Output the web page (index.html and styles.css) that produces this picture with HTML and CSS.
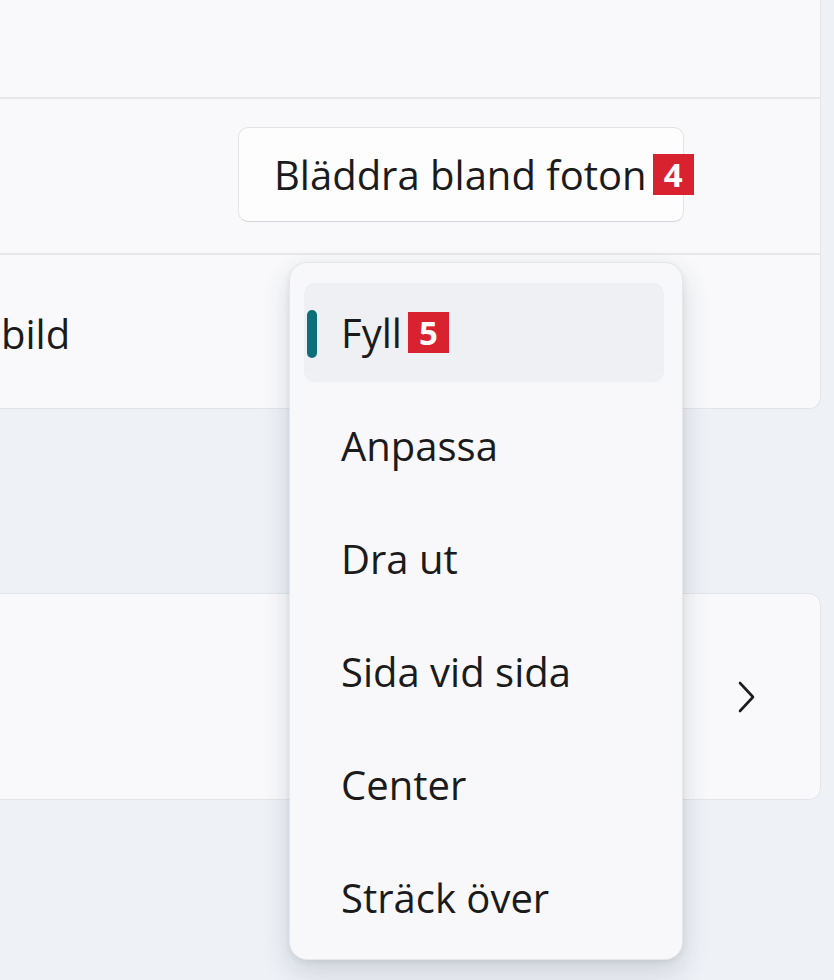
FILE: index.html
```html
<!DOCTYPE html>
<html lang="sv">
<head>
    <meta charset="UTF-8">
    <meta name="viewport" content="width=device-width, initial-scale=1.0">
    <title>Bakgrund</title>
    <link rel="stylesheet" href="styles.css">
</head>
<body>
    <div class="page">
        <!-- Background settings card -->
        <div class="card">
            <div class="row row-top"></div>
            <div class="row row-browse">
                <button class="browse-btn">Bläddra bland foton<span class="badge">4</span></button>
            </div>
            <div class="row row-fit">
                <span class="row-label">bild</span>
            </div>
        </div>

        <!-- Related link card -->
        <div class="card card-link">
            <div class="row row-link">
                <svg class="chevron" width="20" height="34" viewBox="0 0 20 34">
                    <path d="M3 3 L16 17 L3 31" fill="none" stroke="#1c1c1c" stroke-width="2.6" stroke-linecap="round" stroke-linejoin="round"/>
                </svg>
            </div>
        </div>

        <!-- Fit dropdown, open -->
        <div class="menu">
            <div class="menu-item selected">Fyll<span class="badge">5</span></div>
            <div class="menu-item">Anpassa</div>
            <div class="menu-item">Dra ut</div>
            <div class="menu-item">Sida vid sida</div>
            <div class="menu-item">Center</div>
            <div class="menu-item">Sträck över</div>
        </div>
    </div>
</body>
</html>
```

FILE: styles.css
```css
body {
    margin: 0;
    padding: 0;
    background-color: #eef1f6;
    font-family: "Open Sans", "Noto Sans", sans-serif;
    color: #1b1b1b;
    overflow: hidden;
}

.page {
    position: relative; /* the open menu sits over the cards */
    width: 834px;
    height: 980px;
}

.card {
    margin-left: -20px;
    width: 839px;
    background-color: #f9f9fb;
    border: 1px solid #e3e5e9;
    border-top: none;
    border-radius: 0 0 12px 0;
}

.card-link {
    margin-top: 184px;
    border-top: 1px solid #e3e5e9;
    border-radius: 0 12px 12px 0;
}

.row {
    display: flex;
    align-items: center;
    padding-left: 20px;
    padding-right: 136px;
    box-sizing: border-box;
}

.row + .row {
    border-top: 2px solid #e6e8ec;
}

.row-top {
    height: 97px;
}

.row-browse {
    height: 156px;
    justify-content: flex-end;
}

.row-fit {
    height: 155px;
}

.row-link {
    height: 205px;
    justify-content: flex-end;
    padding-right: 63px;
}

.row-label {
    font-size: 40px;
    margin-top: 4px;
}

.browse-btn {
    width: 446px;
    height: 95px;
    padding: 0 0 0 35px;
    display: flex;
    align-items: center;
    white-space: nowrap;
    overflow: visible;
    font-family: inherit;
    font-size: 40px;
    color: #1b1b1b;
    background: #fdfdfd;
    border: 1.5px solid #e4e4e6;
    border-bottom-color: #d4d4d6;
    border-radius: 10px;
    margin-top: -4px;
}

.badge {
    flex-shrink: 0;
    display: inline-flex;
    align-items: center;
    justify-content: center;
    width: 41px;
    height: 41px;
    margin-left: 6px;
    background-color: #d8222f;
    color: #fff;
    font-family: "Open Sans", sans-serif;
    font-weight: 700;
    font-size: 33px;
    line-height: 1;
}

.chevron {
    display: block;
}

.menu {
    position: absolute;
    left: 289px;
    top: 262px;
    width: 394px;
    box-sizing: border-box;
    padding: 20px 18px 12px 14px;
    display: flex;
    flex-direction: column;
    gap: 14px;
    background-color: #f8f8fa;
    border: 1.5px solid #e6e7ea;
    border-radius: 18px;
    box-shadow: 0 12px 28px rgba(40, 50, 70, 0.16), 0 2px 6px rgba(40, 50, 70, 0.08);
}

.menu-item {
    position: relative;
    height: 99px;
    display: flex;
    align-items: center;
    padding-left: 37px;
    font-size: 40px;
    border-radius: 10px;
}

.menu-item.selected {
    background-color: #eff0f3;
}

.menu-item.selected::before {
    content: "";
    position: absolute;
    left: 3px;
    top: 27px;
    width: 10px;
    height: 48px;
    border-radius: 5px;
    background-color: #0e6e7a;
}
```
